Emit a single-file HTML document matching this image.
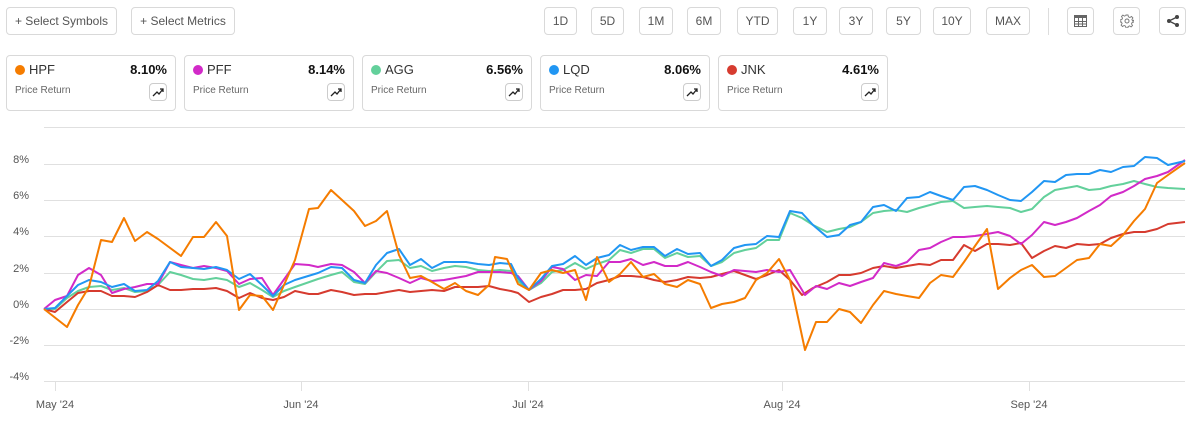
<!DOCTYPE html>
<html><head><meta charset="utf-8"><style>
*{box-sizing:border-box;margin:0;padding:0}
body{width:1195px;height:421px;background:#fff;font-family:"Liberation Sans",Arial,sans-serif;color:#333;position:relative;overflow:hidden}
.b{position:absolute;top:7px;height:28px;border:1px solid #d9d9d9;border-radius:4px;font-size:12px;color:#555;display:flex;align-items:center;justify-content:center;background:#fff}
.card{position:absolute;top:55px;width:170px;height:56px;border:1px solid #d9d9d9;border-radius:4px}
.card .dot{position:absolute;left:8px;top:9px;width:10px;height:10px;border-radius:50%}
.card .s{position:absolute;left:22px;top:6px;font-size:13px;color:#333}
.card .v{position:absolute;right:8px;top:6px;font-size:13px;font-weight:bold;color:#111}
.card .p{position:absolute;left:8px;top:29px;font-size:10px;color:#666}
.card .ic{position:absolute;right:8px;top:27px;width:18px;height:18px;border:1px solid #ccc;border-radius:4px}
.sep{position:absolute;left:1048px;top:8px;width:1px;height:27px;background:#ddd}
</style></head><body>
<div class="b" style="left:6px;width:111px">+ Select Symbols</div>
<div class="b" style="left:131px;width:104px">+ Select Metrics</div>
<div class="b" style="left:544px;width:33px">1D</div>
<div class="b" style="left:591px;width:33px">5D</div>
<div class="b" style="left:639px;width:34px">1M</div>
<div class="b" style="left:687px;width:34px">6M</div>
<div class="b" style="left:737px;width:41px">YTD</div>
<div class="b" style="left:793px;width:34px">1Y</div>
<div class="b" style="left:839px;width:34px">3Y</div>
<div class="b" style="left:886px;width:35px">5Y</div>
<div class="b" style="left:933px;width:38px">10Y</div>
<div class="b" style="left:986px;width:44px">MAX</div>
<div class="sep"></div>
<div class="b" style="left:1067px;width:27px"><svg width="13" height="12" viewBox="0 0 13 12"><rect x="0.5" y="0.5" width="12" height="11" fill="none" stroke="#666"/><rect x="0" y="0" width="13" height="3" fill="#666"/><path d="M4.5 3v9M8.5 3v9M0 6.5h13M0 9h13" stroke="#666"/></svg></div>
<div class="b" style="left:1113px;width:27px"><svg width="14" height="14" viewBox="0 0 14 14"><path d="M6 1h2l.4 1.8 1.5.7 1.6-1 1.4 1.4-1 1.6.7 1.5L14 6v2l-1.8.4-.7 1.5 1 1.6-1.4 1.4-1.6-1-1.5.7L8 14H6l-.4-1.8-1.5-.7-1.6 1-1.4-1.4 1-1.6-.7-1.5L0 8V6l1.8-.4.7-1.5-1-1.6 1.4-1.4 1.6 1 1.5-.7z" fill="none" stroke="#777" stroke-width="0.9"/><circle cx="7" cy="7" r="2" fill="none" stroke="#777"/></svg></div>
<div class="b" style="left:1159px;width:27px"><svg width="14" height="14" viewBox="0 0 14 14"><path d="M11 3L3 7l8 4" stroke="#444" stroke-width="1.3" fill="none"/><circle cx="11" cy="3" r="2" fill="#444"/><circle cx="3" cy="7" r="2" fill="#444"/><circle cx="11" cy="11" r="2" fill="#444"/></svg></div>

<div class="card" style="left:6px"><div class="dot" style="background:#f57c00"></div><div class="s">HPF</div><div class="v">8.10%</div><div class="p">Price Return</div><div class="ic"><svg width="16" height="16" viewBox="0 0 16 16"><path d="M3 12l4-4 2 2 4-5M10 5h3v3" stroke="#222" stroke-width="1.3" fill="none"/></svg></div></div>
<div class="card" style="left:184px"><div class="dot" style="background:#d22ac8"></div><div class="s">PFF</div><div class="v">8.14%</div><div class="p">Price Return</div><div class="ic"><svg width="16" height="16" viewBox="0 0 16 16"><path d="M3 12l4-4 2 2 4-5M10 5h3v3" stroke="#222" stroke-width="1.3" fill="none"/></svg></div></div>
<div class="card" style="left:362px"><div class="dot" style="background:#63d09b"></div><div class="s">AGG</div><div class="v">6.56%</div><div class="p">Price Return</div><div class="ic"><svg width="16" height="16" viewBox="0 0 16 16"><path d="M3 12l4-4 2 2 4-5M10 5h3v3" stroke="#222" stroke-width="1.3" fill="none"/></svg></div></div>
<div class="card" style="left:540px"><div class="dot" style="background:#2196f3"></div><div class="s">LQD</div><div class="v">8.06%</div><div class="p">Price Return</div><div class="ic"><svg width="16" height="16" viewBox="0 0 16 16"><path d="M3 12l4-4 2 2 4-5M10 5h3v3" stroke="#222" stroke-width="1.3" fill="none"/></svg></div></div>
<div class="card" style="left:718px"><div class="dot" style="background:#d63b2f"></div><div class="s">JNK</div><div class="v">4.61%</div><div class="p">Price Return</div><div class="ic"><svg width="16" height="16" viewBox="0 0 16 16"><path d="M3 12l4-4 2 2 4-5M10 5h3v3" stroke="#222" stroke-width="1.3" fill="none"/></svg></div></div>

<svg style="position:absolute;left:0;top:0" width="1195" height="421" font-family="Liberation Sans, Arial, sans-serif" font-size="11" fill="#555">
<g stroke="#e0e0e0" stroke-width="1">
<path d="M44 127.5H1185M44 164.5H1185M44 200.5H1185M44 236.5H1185M44 273.5H1185M44 309.5H1185M44 345.5H1185M44 381.5H1185"/>
<path d="M55.5 381v10M301.5 381v10M528.5 381v10M782.5 381v10M1029.5 381v10"/>
</g>
<g text-anchor="end"><text x="29" y="163">8%</text><text x="29" y="199">6%</text><text x="29" y="235">4%</text><text x="29" y="272">2%</text><text x="29" y="308">0%</text><text x="29" y="344">-2%</text><text x="29" y="380">-4%</text></g>
<g text-anchor="middle"><text x="55" y="408">May '24</text><text x="301" y="408">Jun '24</text><text x="528" y="408">Jul '24</text><text x="782" y="408">Aug '24</text><text x="1029" y="408">Sep '24</text></g>
<g fill="none" stroke-width="2" stroke-linejoin="round">
<polyline stroke="#63d09b" points="44,309 55,309 67,298 78,291 89,287 101,286 112,290 124,288 135,292 147,291 158,285 170,272 181,275 193,279 204,280 216,278 227,280 239,287 250,283 262,290 273,297 284,291 295,287 318,279 331,275 342,272 354,282 365,284 376,272 387,261 399,260 410,268 421,266 432,271 444,268 455,266 466,267 478,270 489,271 500,270 511,271 518,281 529,290 541,283 552,272 563,270 575,263 586,269 597,264 609,260 620,250 631,253 643,249 654,249 665,258 677,253 688,257 700,256 711,266 722,262 734,253 745,250 756,248 767,240 779,240 790,213 802,218 813,225 827,232 839,229 850,227 861,222 873,213 884,211 896,210 907,212 919,208 930,205 941,202 953,201 964,208 975,207 987,206 998,207 1010,208 1021,212 1032,209 1044,197 1055,190 1066,188 1077,186 1089,190 1100,189 1111,186 1123,184 1134,181 1145,184 1157,187 1168,188 1185,189"/>
<polyline stroke="#d63b2f" points="44,309 55,312 67,302 78,293 89,291 101,291 112,296 124,296 135,297 147,292 158,285 170,290 181,290 193,289 204,289 216,288 227,291 239,298 250,293 262,298 273,300 284,297 295,291 309,294 318,294 331,290 342,292 354,295 365,294 376,294 387,292 399,290 410,292 421,291 432,290 444,291 455,287 466,287 478,287 489,286 500,289 511,291 518,293 529,302 541,297 552,294 563,290 575,290 586,289 597,283 609,280 620,276 631,276 643,277 654,280 665,282 677,280 688,277 700,278 711,277 722,274 734,271 745,275 756,279 767,275 779,270 790,280 802,295 813,288 827,282 839,275 850,275 861,273 873,268 884,266 896,268 907,266 919,264 930,265 941,260 953,260 964,245 975,251 987,244 998,244 1010,245 1021,243 1032,258 1044,251 1055,246 1066,248 1077,244 1089,245 1100,244 1111,238 1123,234 1134,232 1145,232 1157,229 1168,224 1185,222"/>
<polyline stroke="#d22ac8" points="44,309 55,300 67,296 78,275 89,268 101,275 112,293 124,289 135,287 147,284 158,284 170,262 181,265 193,268 204,266 216,268 227,271 239,284 250,279 262,278 273,295 295,264 309,265 318,267 331,264 342,265 354,272 365,283 376,271 387,273 399,278 410,283 421,278 432,281 444,280 455,278 466,276 478,272 489,272 500,272 511,273 518,276 529,290 541,281 552,267 563,269 575,280 586,275 597,276 609,262 620,262 631,259 643,265 654,262 665,266 677,266 688,262 700,267 711,272 722,276 734,270 745,271 756,272 767,270 779,272 790,270 805,295 816,286 827,289 839,283 850,286 861,282 873,278 884,263 896,266 907,262 919,250 930,248 941,242 953,237 964,237 975,236 987,234 998,232 1010,236 1021,244 1032,235 1044,222 1055,225 1066,222 1077,218 1089,211 1100,205 1111,196 1123,192 1134,186 1145,179 1157,176 1168,172 1185,160"/>
<polyline stroke="#2196f3" points="44,309 55,308 67,296 78,285 89,280 101,282 112,287 124,284 135,291 147,290 158,281 170,262 181,267 193,268 204,269 216,267 227,270 239,279 250,274 262,285 273,296 284,285 295,280 318,273 331,267 342,268 354,280 365,283 376,265 387,253 399,249 410,265 421,259 432,268 444,262 455,262 466,262 478,264 489,265 500,263 511,264 518,278 529,290 541,279 552,266 563,264 575,256 586,265 597,258 609,255 620,245 631,250 643,247 654,247 665,256 677,249 688,254 700,253 711,266 722,260 734,248 745,245 756,244 767,236 779,237 790,211 802,213 813,225 827,237 839,235 850,225 861,222 873,207 884,205 896,211 907,198 919,197 930,192 941,196 953,200 964,187 975,186 987,190 998,195 1010,200 1021,201 1032,192 1044,181 1055,182 1066,175 1077,174 1089,174 1100,170 1111,172 1123,167 1134,166 1145,157 1157,158 1168,165 1185,161"/>
<polyline stroke="#f57c00" points="44,309 67,327 78,305 89,287 101,240 112,242 124,218 135,241 147,232 158,239 181,256 193,237 204,237 216,222 227,236 239,310 250,295 262,296 273,310 295,260 309,209 318,208 331,190 342,200 354,211 365,226 376,221 387,211 399,255 410,278 421,276 432,282 444,289 455,283 466,291 478,295 489,285 495,257 507,259 518,284 529,290 541,273 552,270 563,273 575,270 586,300 597,257 609,282 620,274 631,262 643,277 654,274 665,284 677,287 688,280 700,284 711,308 722,304 734,302 745,298 756,280 767,273 779,259 790,280 805,350 816,322 827,322 839,309 850,312 861,323 873,305 884,291 896,294 907,296 919,298 930,283 941,275 953,277 964,262 975,246 987,229 998,289 1010,278 1021,270 1032,265 1044,277 1055,276 1066,268 1077,260 1089,258 1100,244 1111,246 1123,235 1134,221 1145,209 1157,183 1168,175 1185,163"/>
</g>
</svg>
</body></html>
